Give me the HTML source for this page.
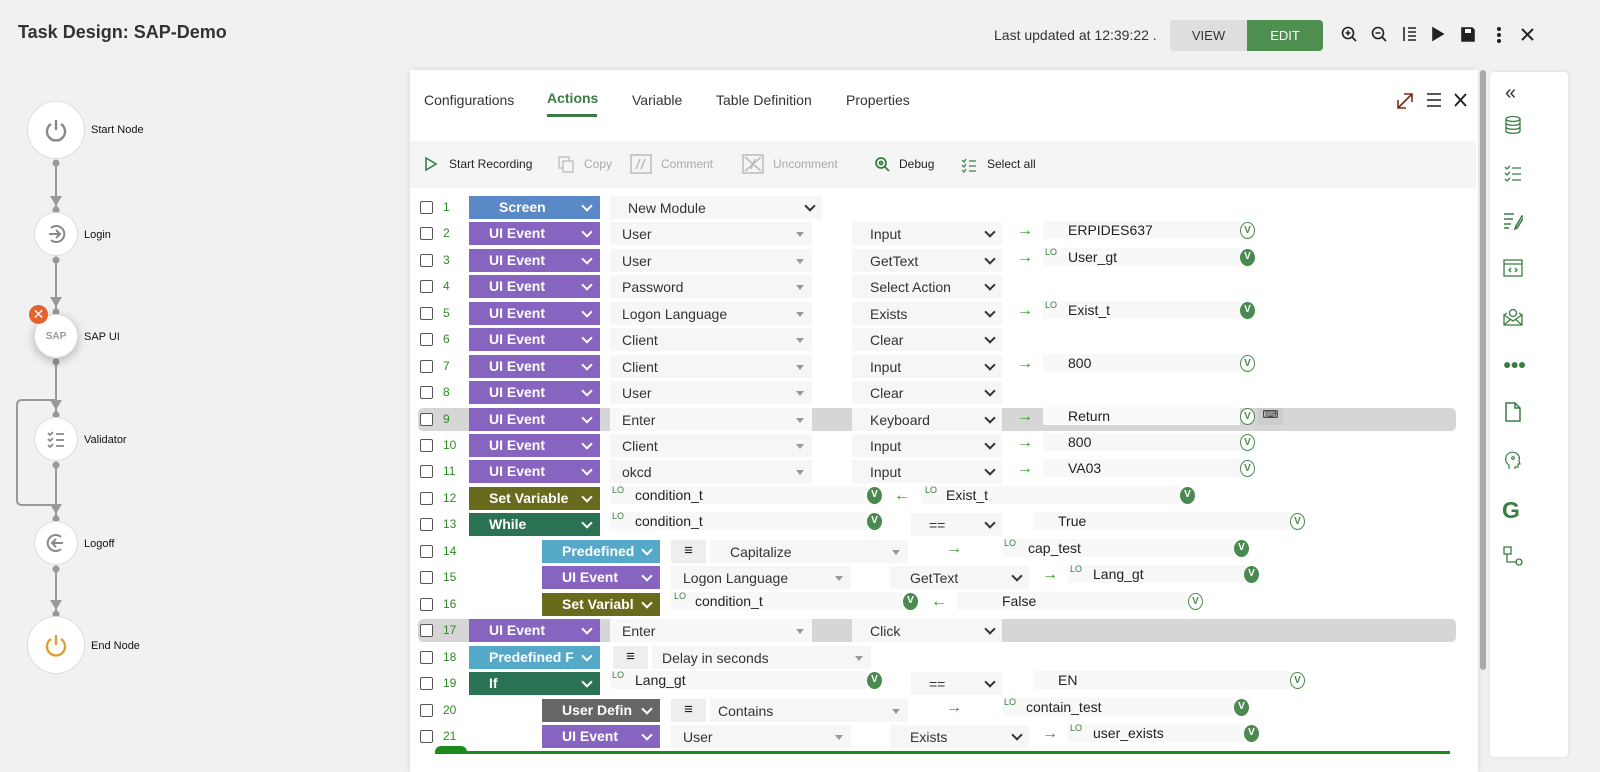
<!DOCTYPE html>
<html><head><meta charset="utf-8"><style>
*{box-sizing:border-box;margin:0;padding:0}
body{width:1600px;height:772px;overflow:hidden;background:#f1f1f1;font-family:"Liberation Sans",Arial,sans-serif;position:relative;color:#222}
.a{position:absolute}
.r{position:absolute;left:0;width:1600px;height:24px}
.r>*{position:absolute}
.cb{left:420px;top:5px;width:13px;height:13px;border:1px solid #555;border-radius:2px;background:#fff}
.n{left:443px;top:4px;font-size:12px;color:#2e8b22}
.t{top:0;height:23px;color:#fff;font-weight:bold;font-size:14px;line-height:23px;padding-left:20px;overflow:hidden;white-space:nowrap}
.t:after{content:"";position:absolute;right:9px;top:6px;width:6px;height:6px;border-right:2px solid #fff;border-bottom:2px solid #fff;transform:rotate(45deg)}
.t0{left:469px;width:131px}.t1{left:542px;width:118px}
.ue{background:#8764c0}.sc{background:#5b88c6;padding-left:30px}.sv{background:#686b1c}.wh{background:#2b7154}.pd{background:#56a8c8}.ud{background:#666}
.s{top:0;height:23px;background:#f6f6f6;font-size:14px;line-height:24px;color:#333;padding-left:12px;white-space:nowrap}
.s.dd:after{content:"";position:absolute;right:8px;top:10px;border:4px solid transparent;border-top:5px solid #999;border-bottom:0}
.s.ch:after{content:"";position:absolute;right:8px;top:6px;width:6px;height:6px;border-right:2px solid #333;border-bottom:2px solid #333;transform:rotate(45deg)}
.c2{left:610px;width:202px}.c3{left:852px;width:150px;padding-left:18px}
.ar{top:0;font-size:16px;color:#2e9b22;font-weight:bold;z-index:2}
.lo{top:-2px;font-size:9px;color:#3a7d44;z-index:2}
.v{top:-1px;height:18px;background:#f8f8f8;font-size:14px;line-height:18px;padding-left:25px;color:#222;white-space:nowrap}
.vf,.vo{top:0;width:15px;height:17px;border-radius:50%;font-size:10px;font-weight:bold;text-align:center;line-height:15px}
.vf{background:#4a8a50;color:#fff}
.vo{border:1px solid #4a8a50;color:#4a8a50;background:#fff}
.hm{top:0;height:23px;width:35px;background:#eee;text-align:center;font-size:15px;line-height:22px}
.hl{position:absolute;left:418px;width:1038px;height:23px;background:#d6d6d6;border-radius:5px}
.nd{position:absolute;background:#fff;border:1px solid #ddd;border-radius:50%;display:flex;align-items:center;justify-content:center;color:#888}
.nl{position:absolute;font-size:11px;color:#111}
.tb{position:absolute;top:157px;font-size:12px;color:#222}
.sb{position:absolute;left:1503px;width:20px;height:20px}
</style></head><body>
<div class="a" style="left:18px;top:22px;font-size:18px;font-weight:bold;color:#333">Task Design: SAP-Demo</div>
<div class="a" style="left:994px;top:27px;font-size:14px;color:#333">Last updated at 12:39:22 .</div>
<div class="a" style="left:1170px;top:20px;width:77px;height:31px;background:#dedede;border-radius:4px 0 0 4px;font-size:13px;color:#333;text-align:center;line-height:31px">VIEW</div>
<div class="a" style="left:1247px;top:20px;width:76px;height:31px;background:#4f8f4f;border-radius:0 4px 4px 0;font-size:13px;color:#fff;text-align:center;line-height:31px">EDIT</div>
<svg class="a" style="left:1340px;top:25px" width="200" height="20" viewBox="0 0 200 20" fill="none" stroke="#222" stroke-width="1.6">
<circle cx="8" cy="8" r="5.5"/><path d="M12 12l4 4M5.5 8h5M8 5.5v5"/>
<circle cx="38" cy="8" r="5.5"/><path d="M42 12l4 4M35.5 8h5"/>
<path d="M64 2v14M68 3h8M68 7h8M68 11h8M68 15h8"/>
<path d="M93 3l10 6-10 6z" fill="#222"/>
<path d="M122 3h10l2 2v11h-12z" fill="#222"/><rect x="125" y="4" width="6" height="4" fill="#fff" stroke="none"/>
<circle cx="159" cy="4" r="1.2" fill="#222"/><circle cx="159" cy="10" r="1.2" fill="#222"/><circle cx="159" cy="16" r="1.2" fill="#222"/>
<path d="M182 4l11 11M193 4l-11 11" stroke-width="2"/>
</svg>
<!-- flow -->
<svg class="a" style="left:0;top:0" width="120" height="700" fill="none" stroke="#999" stroke-width="2">
<path d="M56 163v45M56 260v50M56 362v51M56 465v52M56 569v43M56 400H22q-5 0-5 5v95q0 5 5 5h34"/>
<g fill="#999" stroke="none"><circle cx="56" cy="163" r="3.5"/><circle cx="56" cy="210" r="3.5"/><circle cx="56" cy="260" r="3.5"/><circle cx="56" cy="312" r="3.5"/><circle cx="56" cy="362" r="3.5"/><circle cx="56" cy="415" r="3.5"/><circle cx="56" cy="465" r="3.5"/><circle cx="56" cy="519" r="3.5"/><circle cx="56" cy="569" r="3.5"/><circle cx="56" cy="614" r="3.5"/>
<path d="M50 196h12l-6 10z"/><path d="M50 297h12l-6 10z"/><path d="M50 400h12l-6 10z"/><path d="M50 504h12l-6 10z"/><path d="M50 600h12l-6 10z"/></g>
</svg>
<div class="nd" style="left:27px;top:101px;width:58px;height:58px"><svg width="26" height="26" viewBox="0 0 26 26" fill="none" stroke="#888" stroke-width="2.4"><path d="M8 7a9 9 0 1 0 10 0M13 3v10"/></svg></div>
<div class="nl" style="left:91px;top:124px">Start Node</div>
<div class="nd" style="left:34px;top:212px;width:44px;height:44px"><svg width="22" height="22" viewBox="0 0 22 22" fill="none" stroke="#888" stroke-width="2"><path d="M6 5a8 8 0 1 1 0 12M4 11h11M11 7l4 4-4 4"/></svg></div>
<div class="nl" style="left:84px;top:229px">Login</div>
<div class="nd" style="left:34px;top:314px;width:44px;height:44px;box-shadow:0 3px 10px rgba(0,0,0,.25);font-size:10px;font-weight:bold;color:#999">SAP</div>
<div class="a" style="left:29px;top:305px;width:19px;height:19px;border-radius:50%;background:#e5622e;color:#fff;font-size:14px;text-align:center;line-height:19px">✕</div>
<div class="nl" style="left:84px;top:331px">SAP UI</div>
<div class="nd" style="left:34px;top:417px;width:44px;height:44px"><svg width="22" height="22" viewBox="0 0 22 22" fill="none" stroke="#888" stroke-width="1.7"><path d="M3 5l2 2 3-3M3 11l2 2 3-3M3 17l2 2 3-3M11 6h8M11 12h8M11 18h8"/></svg></div>
<div class="nl" style="left:84px;top:434px">Validator</div>
<div class="nd" style="left:34px;top:521px;width:44px;height:44px"><svg width="22" height="22" viewBox="0 0 22 22" fill="none" stroke="#888" stroke-width="2"><path d="M16 5a8 8 0 1 0 0 12M7 11h11M11 7l-4 4 4 4"/></svg></div>
<div class="nl" style="left:84px;top:538px">Logoff</div>
<div class="nd" style="left:27px;top:616px;width:58px;height:58px"><svg width="26" height="26" viewBox="0 0 26 26" fill="none" stroke="#d9a230" stroke-width="2.4"><path d="M8 7a9 9 0 1 0 10 0M13 3v10"/></svg></div>
<div class="nl" style="left:91px;top:640px">End Node</div>
<!-- panel -->
<div class="a" style="left:410px;top:70px;width:1068px;height:702px;background:#fff;box-shadow:0 0 6px rgba(0,0,0,.12)"></div>
<div class="a" style="left:1480px;top:70px;width:6px;height:600px;background:#aaa;border-radius:3px"></div>
<div class="a" style="left:1490px;top:72px;width:78px;height:685px;background:#fff;border-radius:4px;box-shadow:0 0 4px rgba(0,0,0,.1)"></div>
<div class="a" style="left:424px;top:92px;font-size:14px;color:#333">Configurations</div>
<div class="a" style="left:547px;top:90px;font-size:14px;font-weight:bold;color:#3a7d44">Actions</div>
<div class="a" style="left:547px;top:114px;width:50px;height:3px;background:#3a7d44"></div>
<div class="a" style="left:632px;top:92px;font-size:14px;color:#333">Variable</div>
<div class="a" style="left:716px;top:92px;font-size:14px;color:#333">Table Definition</div>
<div class="a" style="left:846px;top:92px;font-size:14px;color:#333">Properties</div>
<svg class="a" style="left:1396px;top:90px" width="74" height="20" fill="none" stroke="#222" stroke-width="1.6"><path d="M2 18L16 4M8 4h8v8M2 10v8h8" stroke="#7a2a1a"/><path d="M31 4h14M31 10h14M31 16h14"/><path d="M59 4l11 12M70 4L59 16" stroke-width="2"/></svg>
<div class="a" style="left:410px;top:141px;width:1066px;height:47px;background:#f5f5f5"></div>
<svg class="a" style="left:424px;top:156px" width="14" height="16" fill="none" stroke="#3a7d44" stroke-width="1.6"><path d="M2 2l10 6-10 6z"/></svg>
<div class="tb" style="left:449px">Start Recording</div>
<svg class="a" style="left:558px;top:156px" width="18" height="18" fill="none" stroke="#bbb" stroke-width="1.3"><rect x="1" y="1" width="10" height="11"/><rect x="5" y="5" width="10" height="11" fill="#f5f5f5"/></svg>
<div class="tb" style="left:584px;color:#aaa">Copy</div>
<svg class="a" style="left:630px;top:154px" width="22" height="20" fill="none" stroke="#bbb" stroke-width="1.5"><rect x="1" y="1" width="20" height="18"/><path d="M6 15l4-10M11 15l4-10"/></svg>
<div class="tb" style="left:661px;color:#aaa">Comment</div>
<svg class="a" style="left:742px;top:154px" width="22" height="20" fill="none" stroke="#bbb" stroke-width="1.5"><rect x="1" y="1" width="20" height="18"/><path d="M3 3l16 14M19 3L3 17M9 15l4-10"/></svg>
<div class="tb" style="left:773px;color:#aaa">Uncomment</div>
<svg class="a" style="left:874px;top:156px" width="16" height="16" fill="none" stroke="#3a7d44" stroke-width="1.8"><circle cx="7" cy="7" r="5"/><circle cx="7" cy="7" r="1.5"/><path d="M11 11l4 4"/></svg>
<div class="tb" style="left:899px">Debug</div>
<svg class="a" style="left:961px;top:157px" width="16" height="16" fill="none" stroke="#3a7d44" stroke-width="1.2"><path d="M1 3l2 2 2-3M1 8l2 2 2-3M1 13l2 2 2-3M8 4h7M8 9h7M8 14h7"/></svg>
<div class="tb" style="left:987px">Select all</div>
<!-- sidebar icons -->
<div class="a" style="left:1505px;top:82px;font-size:20px;color:#333">«</div>
<svg class="sb" style="top:115px" fill="none" stroke="#3a7d44" stroke-width="1.3"><ellipse cx="10" cy="4" rx="7" ry="2.5"/><path d="M3 4v12c0 3 14 3 14 0V4M3 8c0 3 14 3 14 0M3 12c0 3 14 3 14 0"/></svg>
<svg class="sb" style="top:163px" fill="none" stroke="#3a7d44" stroke-width="1.3"><path d="M2 4l2 2 3-3M2 10l2 2 3-3M2 16l2 2 3-3M9 5h9M9 11h9M9 17h9"/></svg>
<svg class="sb" style="top:210px" fill="none" stroke="#3a7d44" stroke-width="1.6"><path d="M1 4h10M1 9h9M1 14h7M1 18h5M14 18l-2 1 1-3 6-10 2 1z"/></svg>
<svg class="sb" style="top:258px" fill="none" stroke="#3a7d44" stroke-width="1.3"><rect x="1" y="2" width="18" height="16"/><path d="M1 6h18M8 10l-2 2 2 2M12 10l2 2-2 2"/></svg>
<svg class="sb" style="top:307px" fill="none" stroke="#3a7d44" stroke-width="1.3"><path d="M1 8l9 6 9-6v10H1zM1 8l3-2M19 8l-3-2M1 18l7-6M19 18l-7-6"/><circle cx="10" cy="6" r="3.5"/></svg>
<div class="a" style="left:1503px;top:356px;font-size:14px;color:#3a7d44;letter-spacing:-1px">●●●</div>
<svg class="sb" style="top:402px" fill="none" stroke="#3a7d44" stroke-width="1.5"><path d="M3 1h9l5 5v13H3zM12 1v5h5"/></svg>
<svg class="sb" style="top:450px" fill="none" stroke="#3a7d44" stroke-width="1.2"><path d="M6 19v-4c-3-2-4-5-3-8 1-4 6-6 10-4 3 2 4 5 3 8l1 3h-2v3h-3v2"/><circle cx="10" cy="8" r="1.3"/></svg>
<div class="a" style="left:1502px;top:497px;font-size:23px;font-weight:bold;color:#3a7d44">G</div>
<svg class="sb" style="top:546px" fill="none" stroke="#3a7d44" stroke-width="1.3"><rect x="1" y="1" width="7" height="7"/><path d="M4 8v8h10"/><circle cx="16" cy="16" r="3"/></svg>
<!-- rows -->
<div class="hl" style="top:408px"></div>
<div class="hl" style="top:619px"></div>

<div class="r" style="top:196px"><i class="cb"></i><b class="n" style="font-weight:normal">1</b><div class="t t0 sc">Screen</div><div class="s ch" style="left:610px;width:212px;padding-left:18px">New Module</div></div>

<div class="r" style="top:222px"><i class="cb"></i><span class="n">2</span><div class="t t0 ue">UI Event</div><div class="s c2 dd">User</div><div class="s c3 ch">Input</div><span class="ar" style="left:1017px">→</span><div class="v" style="left:1043px;width:197px">ERPIDES637</div><span class="vo" style="left:1240px">V</span></div>

<div class="r" style="top:249px"><i class="cb"></i><span class="n">3</span><div class="t t0 ue">UI Event</div><div class="s c2 dd">User</div><div class="s c3 ch">GetText</div><span class="ar" style="left:1017px">→</span><span class="lo" style="left:1045px">LO</span><div class="v" style="left:1043px;width:197px">User_gt</div><span class="vf" style="left:1240px">V</span></div>

<div class="r" style="top:275px"><i class="cb"></i><span class="n">4</span><div class="t t0 ue">UI Event</div><div class="s c2 dd">Password</div><div class="s c3 ch">Select Action</div></div>

<div class="r" style="top:302px"><i class="cb"></i><span class="n">5</span><div class="t t0 ue">UI Event</div><div class="s c2 dd">Logon Language</div><div class="s c3 ch">Exists</div><span class="ar" style="left:1017px">→</span><span class="lo" style="left:1045px">LO</span><div class="v" style="left:1043px;width:197px">Exist_t</div><span class="vf" style="left:1240px">V</span></div>

<div class="r" style="top:328px"><i class="cb"></i><span class="n">6</span><div class="t t0 ue">UI Event</div><div class="s c2 dd">Client</div><div class="s c3 ch">Clear</div></div>

<div class="r" style="top:355px"><i class="cb"></i><span class="n">7</span><div class="t t0 ue">UI Event</div><div class="s c2 dd">Client</div><div class="s c3 ch">Input</div><span class="ar" style="left:1017px">→</span><div class="v" style="left:1043px;width:197px">800</div><span class="vo" style="left:1240px">V</span></div>

<div class="r" style="top:381px"><i class="cb"></i><span class="n">8</span><div class="t t0 ue">UI Event</div><div class="s c2 dd">User</div><div class="s c3 ch">Clear</div></div>

<div class="r" style="top:408px"><i class="cb"></i><span class="n">9</span><div class="t t0 ue">UI Event</div><div class="s c2 dd" style="background:#f8f8f8">Enter</div><div class="s c3 ch">Keyboard</div><span class="ar" style="left:1017px">→</span><div class="v" style="left:1043px;width:197px;background:#fafafa">Return</div><span class="vo" style="left:1240px">V</span><span style="left:1258px;top:0;width:25px;height:17px;background:#ccc;font-size:11px;text-align:center">⌨</span></div>

<div class="r" style="top:434px"><i class="cb"></i><span class="n">10</span><div class="t t0 ue">UI Event</div><div class="s c2 dd">Client</div><div class="s c3 ch">Input</div><span class="ar" style="left:1017px">→</span><div class="v" style="left:1043px;width:197px">800</div><span class="vo" style="left:1240px">V</span></div>

<div class="r" style="top:460px"><i class="cb"></i><span class="n">11</span><div class="t t0 ue">UI Event</div><div class="s c2 dd">okcd</div><div class="s c3 ch">Input</div><span class="ar" style="left:1017px">→</span><div class="v" style="left:1043px;width:197px">VA03</div><span class="vo" style="left:1240px">V</span></div>

<div class="r" style="top:487px"><i class="cb"></i><span class="n">12</span><div class="t t0 sv">Set Variable</div><span class="lo" style="left:612px">LO</span><div class="v" style="left:610px;width:258px">condition_t</div><span class="vf" style="left:867px">V</span><span class="ar" style="left:894px">←</span><span class="lo" style="left:925px">LO</span><div class="v" style="left:921px;width:259px">Exist_t</div><span class="vf" style="left:1180px">V</span></div>

<div class="r" style="top:513px"><i class="cb"></i><span class="n">13</span><div class="t t0 wh">While</div><span class="lo" style="left:612px">LO</span><div class="v" style="left:610px;width:258px">condition_t</div><span class="vf" style="left:867px">V</span><div class="s ch" style="left:911px;width:91px;padding-left:18px">==</div><div class="v" style="left:1033px;width:257px">True</div><span class="vo" style="left:1290px">V</span></div>

<div class="r" style="top:540px"><i class="cb"></i><span class="n">14</span><div class="t t1 pd">Predefined</div><div class="hm" style="left:671px">≡</div><div class="s dd" style="left:710px;width:198px;padding-left:20px">Capitalize</div><span class="ar" style="left:946px">→</span><span class="lo" style="left:1004px">LO</span><div class="v" style="left:1003px;width:232px">cap_test</div><span class="vf" style="left:1234px">V</span></div>

<div class="r" style="top:566px"><i class="cb"></i><span class="n">15</span><div class="t t1 ue">UI Event</div><div class="s dd" style="left:671px;width:180px">Logon Language</div><div class="s ch" style="left:890px;width:139px;padding-left:20px">GetText</div><span class="ar" style="left:1042px">→</span><span class="lo" style="left:1070px">LO</span><div class="v" style="left:1068px;width:177px">Lang_gt</div><span class="vf" style="left:1244px">V</span></div>

<div class="r" style="top:593px"><i class="cb"></i><span class="n">16</span><div class="t t1 sv">Set Variabl</div><span class="lo" style="left:674px">LO</span><div class="v" style="left:670px;width:232px">condition_t</div><span class="vf" style="left:903px">V</span><span class="ar" style="left:931px">←</span><div class="v" style="left:957px;width:230px;padding-left:45px">False</div><span class="vo" style="left:1188px">V</span></div>

<div class="r" style="top:619px"><i class="cb"></i><span class="n">17</span><div class="t t0 ue">UI Event</div><div class="s c2 dd" style="background:#f8f8f8">Enter</div><div class="s c3 ch">Click</div></div>

<div class="r" style="top:646px"><i class="cb"></i><span class="n">18</span><div class="t t0 pd">Predefined F</div><div class="hm" style="left:613px">≡</div><div class="s dd" style="left:652px;width:219px;padding-left:10px">Delay in seconds</div></div>

<div class="r" style="top:672px"><i class="cb"></i><span class="n">19</span><div class="t t0 wh">If</div><span class="lo" style="left:612px">LO</span><div class="v" style="left:610px;width:258px">Lang_gt</div><span class="vf" style="left:867px">V</span><div class="s ch" style="left:911px;width:91px;padding-left:18px">==</div><div class="v" style="left:1033px;width:257px">EN</div><span class="vo" style="left:1290px">V</span></div>

<div class="r" style="top:699px"><i class="cb"></i><span class="n">20</span><div class="t t1 ud">User Defin</div><div class="hm" style="left:671px">≡</div><div class="s dd" style="left:710px;width:198px;padding-left:8px">Contains</div><span class="ar" style="left:946px">→</span><span class="lo" style="left:1004px">LO</span><div class="v" style="left:1003px;width:232px;padding-left:23px">contain_test</div><span class="vf" style="left:1234px">V</span></div>

<div class="r" style="top:725px"><i class="cb"></i><span class="n">21</span><div class="t t1 ue">UI Event</div><div class="s dd" style="left:671px;width:180px">User</div><div class="s ch" style="left:890px;width:139px;padding-left:20px">Exists</div><span class="ar" style="left:1042px">→</span><span class="lo" style="left:1070px">LO</span><div class="v" style="left:1068px;width:177px">user_exists</div><span class="vf" style="left:1244px">V</span></div>

<div class="a" style="left:435px;top:746px;width:32px;height:8px;background:#1e8a1e;border-radius:6px 6px 0 0"></div>
<div class="a" style="left:435px;top:751px;width:1015px;height:3px;background:#1e8a1e"></div>
</body></html>
